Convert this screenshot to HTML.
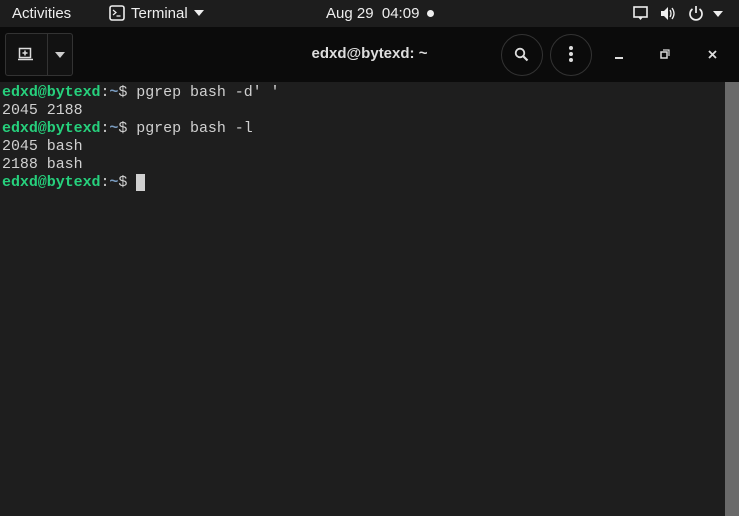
<!DOCTYPE html><html><head><style>
body{margin:0;width:739px;height:516px;overflow:hidden;background:#1e1e1e;font-family:"Liberation Sans",sans-serif;position:relative}
#top{position:absolute;left:0;top:0;width:739px;height:27px;background:#1d1d1d;color:#eee;font-size:15px}
#top span{position:absolute;top:5px}
#hdr{position:absolute;left:0;top:27px;width:739px;height:55px;background:#0b0b0b}
.btn{position:absolute;border:1px solid #333;box-sizing:border-box}
.circ{position:absolute;top:34px;width:42px;height:42px;border-radius:50%;border:1px solid #333;box-sizing:border-box}
#term{position:absolute;left:2px;top:84px;font-family:"Liberation Mono",monospace;font-size:15px;line-height:18px;color:#d0d0d0;white-space:pre;letter-spacing:-0.05px}
.g{color:#26d07c;font-weight:bold}.b{color:#7a9cc0;font-weight:bold}
#sb{position:absolute;left:725px;top:82px;width:14px;height:434px;background:#6a6a6a}
</style></head><body>
<div id="top">
<span style="left:12px">Activities</span>
<svg style="position:absolute;left:109px;top:5px" width="16" height="16"><rect x="1" y="1" width="14" height="14" rx="2" fill="none" stroke="#eee" stroke-width="1.6"/><path d="M4 5l3 2.5-3 2.5M7.5 11h4" stroke="#eee" stroke-width="1.2" fill="none"/></svg>
<span style="left:131px">Terminal</span>
<svg style="position:absolute;left:194px;top:10px" width="10" height="6"><path d="M0 0h10L5 6z" fill="#eee"/></svg>
<span style="left:326px">Aug 29&nbsp; 04:09</span>
<div style="position:absolute;left:427px;top:10px;width:7px;height:7px;border-radius:50%;background:#eee"></div>
<svg style="position:absolute;left:633px;top:6px" width="16" height="15"><rect x="1" y="1" width="13" height="10" fill="none" stroke="#eee" stroke-width="1.6"/><path d="M5 11l2.5 3 2.5-3" fill="#eee"/></svg>
<svg style="position:absolute;left:660px;top:6px" width="16" height="15"><path d="M1 5h3l4-4v13l-4-4H1z" fill="#eee"/><path d="M10 4q2 3.5 0 7M12 2q4 5.5 0 11" stroke="#eee" fill="none" stroke-width="1.3"/></svg>
<svg style="position:absolute;left:688px;top:5px" width="16" height="16"><path d="M4.5 4a6 6 0 1 0 7 0" stroke="#eee" fill="none" stroke-width="1.7"/><path d="M8 1v7" stroke="#eee" stroke-width="1.7"/></svg>
<svg style="position:absolute;left:713px;top:11px" width="10" height="6"><path d="M0 0h10L5 6z" fill="#eee"/></svg>
</div>
<div id="hdr"></div>
<div class="btn" style="left:5px;top:33px;width:68px;height:43px;border-radius:3px;background:#121212"></div>
<div style="position:absolute;left:47px;top:34px;width:1px;height:41px;background:#333"></div>
<svg style="position:absolute;left:18px;top:47px" width="15" height="14"><rect x="1.5" y="1.5" width="11" height="9" fill="none" stroke="#ddd" stroke-width="1.5"/><path d="M7 3.5v5M4.5 6h5" stroke="#ddd" stroke-width="1.5"/><path d="M0 12.5h15" stroke="#ddd" stroke-width="1.5"/></svg>
<svg style="position:absolute;left:55px;top:52px" width="10" height="6"><path d="M0 0h10L5 6z" fill="#ccc"/></svg>
<div style="position:absolute;left:0;width:739px;top:45px;text-align:center;color:#ddd;font-weight:bold;font-size:15px">edxd@bytexd: ~</div>
<div class="circ" style="left:501px"></div>
<div class="circ" style="left:550px"></div>
<svg style="position:absolute;left:514px;top:47px" width="16" height="16"><circle cx="6" cy="6" r="4.3" stroke="#ddd" stroke-width="1.8" fill="none"/><path d="M9 9l4.5 4.5" stroke="#ddd" stroke-width="2.2"/></svg>
<div style="position:absolute;left:569px;top:46px;width:4px;height:4px;border-radius:50%;background:#ddd;box-shadow:0 6px 0 #ddd,0 12px 0 #ddd"></div>
<div style="position:absolute;left:615px;top:57px;width:8px;height:2px;background:#ddd"></div>
<svg style="position:absolute;left:660px;top:49px" width="10" height="10"><rect x="1" y="3" width="6" height="6" fill="none" stroke="#ddd" stroke-width="1.5"/><path d="M3 1h6v6" fill="none" stroke="#ddd" stroke-width="1.2"/></svg>
<svg style="position:absolute;left:708px;top:50px" width="9" height="9"><path d="M1 1l7 7M8 1l-7 7" stroke="#ddd" stroke-width="1.8"/></svg>
<div id="term"><span class="g">edxd@bytexd</span>:<span class="b">~</span>$ pgrep bash -d' '
2045 2188
<span class="g">edxd@bytexd</span>:<span class="b">~</span>$ pgrep bash -l
2045 bash
2188 bash
<span class="g">edxd@bytexd</span>:<span class="b">~</span>$ <span style="background:#d0d0d0"> </span></div>
<div id="sb"></div>
</body></html>
